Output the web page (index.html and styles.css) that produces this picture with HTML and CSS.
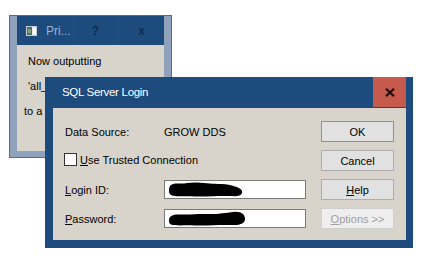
FILE: index.html
```html
<!DOCTYPE html>
<html>
<head>
<meta charset="utf-8">
<link rel="stylesheet" href="styles.css">
</head>
<body>
<div class="desktop">
  <div class="win-back">
    <div class="back-title">
      <div class="back-caption">
        <svg class="app-icon" width="11" height="10" viewBox="0 0 11 10">
          <rect x="0.5" y="0.5" width="10" height="9" fill="#e8e8e8" stroke="#c8ccd2"/>
          <rect x="1" y="1" width="5" height="8" fill="#4f6f5a"/>
          <rect x="2" y="3" width="3" height="4" fill="#7fa38a"/>
          <rect x="7" y="2" width="3" height="6" fill="#ffffff"/>
        </svg>
        <span class="back-name">Pri...</span>
      </div>
      <div class="cap-btn">?</div>
      <div class="cap-btn">x</div>
    </div>
    <div class="back-body">
      <div class="msg-line">Now outputting</div>
      <div class="msg-line">'all_</div>
      <div class="msg-line shifted">to a</div>
    </div>
  </div>

  <div class="win-front">
    <div class="front-title">
      <span class="front-name">SQL Server Login</span>
      <div class="close-btn">
        <svg width="10" height="9" viewBox="0 0 10 9"><path d="M1 0.8 L9 8.2 M9 0.8 L1 8.2" stroke="#1a0f0d" stroke-width="2.2"/></svg>
      </div>
    </div>
    <div class="front-body">
      <div class="lbl r1">Data Source:</div>
      <div class="val r1">GROW DDS</div>
      <div class="check-row r2">
        <span class="checkbox"></span>
        <span><u>U</u>se Trusted Connection</span>
      </div>
      <div class="lbl r3"><u>L</u>ogin ID:</div>
      <div class="field r3">
        <svg class="scribble" width="78" height="17" viewBox="0 0 78 17">
          <path d="M2 9 C2 4 5 2 12 2.5 C18 3 22 1 30 1.5 C40 2 46 3 54 3 C60 3 64 4 68 5.5 C73 7 76 9 75 12 C74 15 70 15.5 64 15 C52 14.5 40 16 28 15.5 C18 15 8 16 4 14 C2 13 2 11 2 9 Z" fill="#000"/>
        </svg>
      </div>
      <div class="lbl r4"><u>P</u>assword:</div>
      <div class="field r4">
        <svg class="scribble" width="80" height="17" viewBox="0 0 80 17">
          <path d="M2 10 C2 6 6 4 14 4.5 C24 5 30 3.5 40 4 C50 4.5 58 3 66 2 C74 1 78 4 78 9 C78 13 74 15.5 64 15 C52 14.5 40 16 28 15.5 C18 15 8 16 4 14.5 C2 13.5 2 12 2 10 Z" fill="#000"/>
        </svg>
      </div>
      <div class="btn default b1">OK</div>
      <div class="btn b2">Cancel</div>
      <div class="btn b3"><u>H</u>elp</div>
      <div class="btn disabled b4"><u>O</u>ptions &gt;&gt;</div>
    </div>
  </div>
</div>
</body>
</html>
```

FILE: styles.css
```css
* { box-sizing: border-box; }
html, body {
  margin: 0;
  padding: 0;
  background: #ffffff;
}
body {
  font-family: "Liberation Sans", Arial, sans-serif;
  font-size: 11px;
  color: #000;
}
.desktop {
  position: relative;
  width: 425px;
  height: 272px;
  overflow: hidden;
}

/* back window */
.win-back {
  position: absolute;
  left: 9px;
  top: 15px;
  width: 163px;
  height: 143px;
  border: 1px solid #5a6b84;
  background: #8fa1bb;
  padding: 0 7px 6px 7px;
  display: flex;
  flex-direction: column;
}
.back-title {
  height: 29px;
  background: #1e4b7e;
  display: flex;
  align-items: center;
}
.back-caption {
  width: 55px;
  height: 100%;
  display: flex;
  align-items: center;
  padding-left: 9px;
  gap: 9px;
}
.app-icon { display: block; flex: none; }
.back-name {
  color: #9fb0c8;
  font-size: 12px;
  white-space: nowrap;
}
.cap-btn {
  width: 46px;
  height: 100%;
  display: flex;
  align-items: center;
  justify-content: center;
  color: #0f2d52;
  font-weight: bold;
  font-size: 12px;
  border-left: 1px solid #214e80;
}
.back-body {
  flex: 1;
  background: #d8d4cc;
  padding-top: 4px;
  overflow: hidden;
}
.msg-line {
  line-height: 25px;
  padding-left: 11px;
  white-space: nowrap;
}
.msg-line.shifted { padding-left: 7px; }

/* front window */
.win-front {
  position: absolute;
  left: 45px;
  top: 77px;
  width: 368px;
  height: 171px;
  background: #1e4b7e;
  display: flex;
  flex-direction: column;
}
.front-title {
  height: 31px;
  display: flex;
  align-items: flex-start;
  padding-left: 17px;
  padding-right: 7px;
}
.front-name {
  color: #ffffff;
  font-size: 11.5px;
  letter-spacing: -0.3px;
  line-height: 31px;
  flex: 1;
}
.close-btn {
  width: 33px;
  height: 30px;
  background: #c65a4d;
  display: flex;
  align-items: center;
  justify-content: center;
}
.close-btn svg { display: block; }
.front-body {
  flex: 1;
  margin: 0 7px 8px 8px;
  background: #d8d4cc;
  display: grid;
  grid-template-columns: 84px 142px 73px;
  grid-template-rows: 21px 21px 21px 21px;
  column-gap: 15px;
  row-gap: 8px;
  padding: 13px 0 0 12px;
  align-content: start;
}
.r1 { grid-row: 1; }
.r2 { grid-row: 2; }
.r3 { grid-row: 3; }
.r4 { grid-row: 4; }
.lbl {
  grid-column: 1;
  display: flex;
  align-items: center;
}
.val {
  grid-column: 2;
  display: flex;
  align-items: center;
}
.check-row {
  grid-column: 1 / 3;
  display: flex;
  align-items: center;
  gap: 3px;
  margin-left: -1px;
  margin-top: -2px;
}
.checkbox {
  width: 13px;
  height: 13px;
  background: #fff;
  border: 1px solid #333;
  flex: none;
}
.field {
  grid-column: 2;
  align-self: center;
  height: 19px;
  background: #fff;
  border: 1px solid #7a7a7a;
  display: flex;
  align-items: center;
  padding-left: 2px;
  overflow: hidden;
}
.scribble { display: block; flex: none; }
.btn {
  grid-column: 3;
  display: flex;
  align-items: center;
  justify-content: center;
  background: #e1e1e1;
  border: 1px solid #adadad;
}
.b1 { grid-row: 1; }
.b2 { grid-row: 2; }
.b3 { grid-row: 3; }
.b4 { grid-row: 4; }
.btn.default { border-color: #6f96c4; }
.btn.disabled {
  background: #eeeeee;
  border-color: #cfcfcf;
  color: #a0a0a0;
}
```
